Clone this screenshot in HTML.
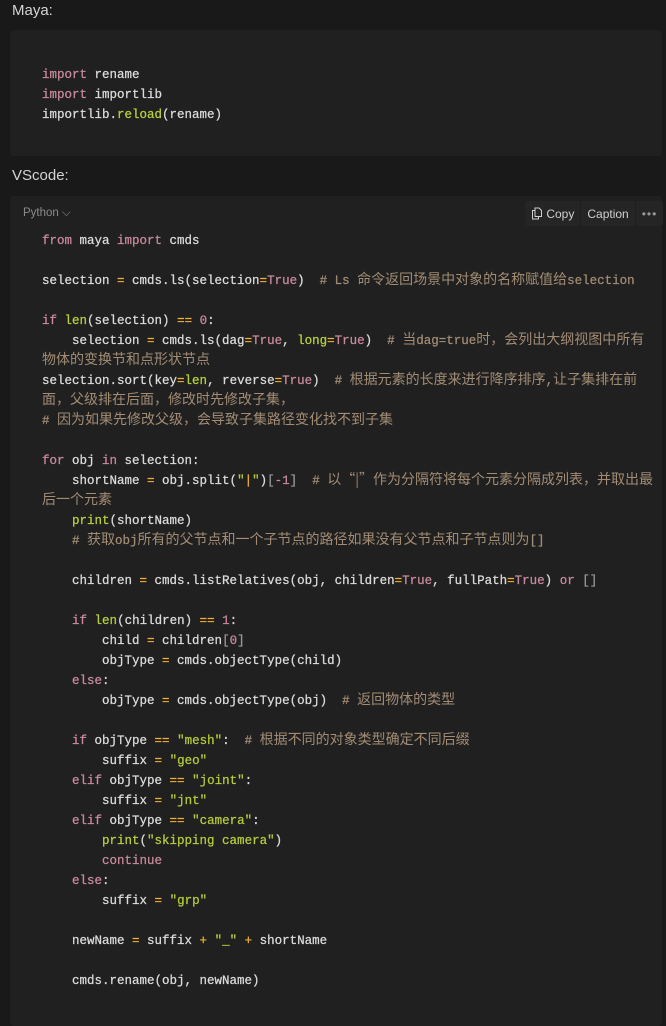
<!DOCTYPE html>
<html><head><meta charset="utf-8"><style>
html,body{margin:0;padding:0;background:#191919;width:666px;height:1008px;overflow:hidden}
.h{position:absolute;left:12px;color:#d4d4d4;font:15px "Liberation Sans","Noto Sans CJK SC",sans-serif}
.blk{position:absolute;left:10px;width:652px;background:#202020;border-radius:4px}
pre{position:absolute;left:42px;margin:0;font:12.5px/20px "Liberation Mono","Noto Sans CJK SC",monospace;color:#dcdcdc;white-space:pre;-webkit-text-stroke:0.25px}
i{font-style:normal;font-size:14px;font-family:"Noto Sans CJK SC",sans-serif;line-height:0;-webkit-text-stroke:0}
.k{color:#c98a9c}.f{color:#b6d23a}.o{color:#f0b02c}.t{color:#c98a9c}.c{color:#a28c74}.s{color:#b6cc3a}.g{color:#9a9a9a}
.lang{position:absolute;left:23px;top:207px;color:#8a8a8a;font:11.5px "Liberation Sans",sans-serif}
.btns{position:absolute;left:525px;top:201px;height:25px;display:flex;background:#252525;border-radius:3px;font:12px "Liberation Sans",sans-serif;color:#cfcfcf}
.btns div{display:flex;align-items:center;padding:0 6px;border-right:1px solid #1e1e1e}
</style></head><body>
<div class="h" style="top:2px">Maya:</div>
<div class="blk" style="top:30px;height:126px"></div>
<pre style="top:65px"><span class="k">import</span> rename
<span class="k">import</span> importlib
importlib.<span class="f">reload</span>(rename)</pre>
<div class="h" style="top:167px">VScode:</div>
<div class="blk" style="top:196px;height:830px"></div>
<div class="lang">Python ⌵</div>
<div class="btns"><div><svg width="12" height="13" viewBox="0 0 12 13" fill="none" stroke="#cfcfcf" stroke-width="1"><path d="M3.5 3.5h-2v8.5h6v-2"/><path d="M4 1h4l2.5 2.5v6H4z"/></svg>&nbsp;Copy</div><div>Caption</div><div style="border:0;letter-spacing:1px;color:#999">•••</div></div>
<pre style="top:231px"><span class="k">from</span> maya <span class="k">import</span> cmds

selection <span class="o">=</span> cmds.ls(selection<span class="o">=</span><span class="t">True</span>)  <span class="c"># Ls <i>命令返回场景中对象的名称赋值给</i>selection</span>

<span class="k">if</span> <span class="f">len</span>(selection) <span class="o">==</span> <span class="t">0</span>:
    selection <span class="o">=</span> cmds.ls(dag<span class="o">=</span><span class="t">True</span>, <span class="f">long</span><span class="o">=</span><span class="t">True</span>)  <span class="c"># <i>当</i>dag=true<i>时，会列出大纲视图中所有</i>
<i>物体的变换节和点形状节点</i></span>
selection.sort(key<span class="o">=</span><span class="f">len</span>, reverse<span class="o">=</span><span class="t">True</span>)  <span class="c"># <i>根据元素的长度来进行降序排序</i>,<i>让子集排在前</i>
<i>面，父级排在后面，修改时先修改子集，</i>
# <i>因为如果先修改父级，会导致子集路径变化找不到子集</i></span>

<span class="k">for</span> obj <span class="k">in</span> selection:
    shortName <span class="o">=</span> obj.split(<span class="s">"</span><span class="o">|</span><span class="s">"</span>)<span class="g">[</span><span class="t">-1</span><span class="g">]</span>  <span class="c"># <i>以“|”作为分隔符将每个元素分隔成列表，并取出最</i>
<i>后一个元素</i></span>
    <span class="f">print</span>(shortName)
    <span class="c"># <i>获取</i>obj<i>所有的父节点和一个子节点的路径如果没有父节点和子节点则为</i>[]</span>

    children <span class="o">=</span> cmds.listRelatives(obj, children<span class="o">=</span><span class="t">True</span>, fullPath<span class="o">=</span><span class="t">True</span>) <span class="k">or</span> <span class="g">[]</span>

    <span class="k">if</span> <span class="f">len</span>(children) <span class="o">==</span> <span class="t">1</span>:
        child <span class="o">=</span> children<span class="g">[</span><span class="t">0</span><span class="g">]</span>
        objType <span class="o">=</span> cmds.objectType(child)
    <span class="k">else</span>:
        objType <span class="o">=</span> cmds.objectType(obj)  <span class="c"># <i>返回物体的类型</i></span>

    <span class="k">if</span> objType <span class="o">==</span> <span class="s">"mesh"</span>:  <span class="c"># <i>根据不同的对象类型确定不同后缀</i></span>
        suffix <span class="o">=</span> <span class="s">"geo"</span>
    <span class="k">elif</span> objType <span class="o">==</span> <span class="s">"joint"</span>:
        suffix <span class="o">=</span> <span class="s">"jnt"</span>
    <span class="k">elif</span> objType <span class="o">==</span> <span class="s">"camera"</span>:
        <span class="f">print</span>(<span class="s">"skipping camera"</span>)
        <span class="k">continue</span>
    <span class="k">else</span>:
        suffix <span class="o">=</span> <span class="s">"grp"</span>

    newName <span class="o">=</span> suffix <span class="o">+</span> <span class="s">"_"</span> <span class="o">+</span> shortName

    cmds.rename(obj, newName)</pre>
</body></html>
